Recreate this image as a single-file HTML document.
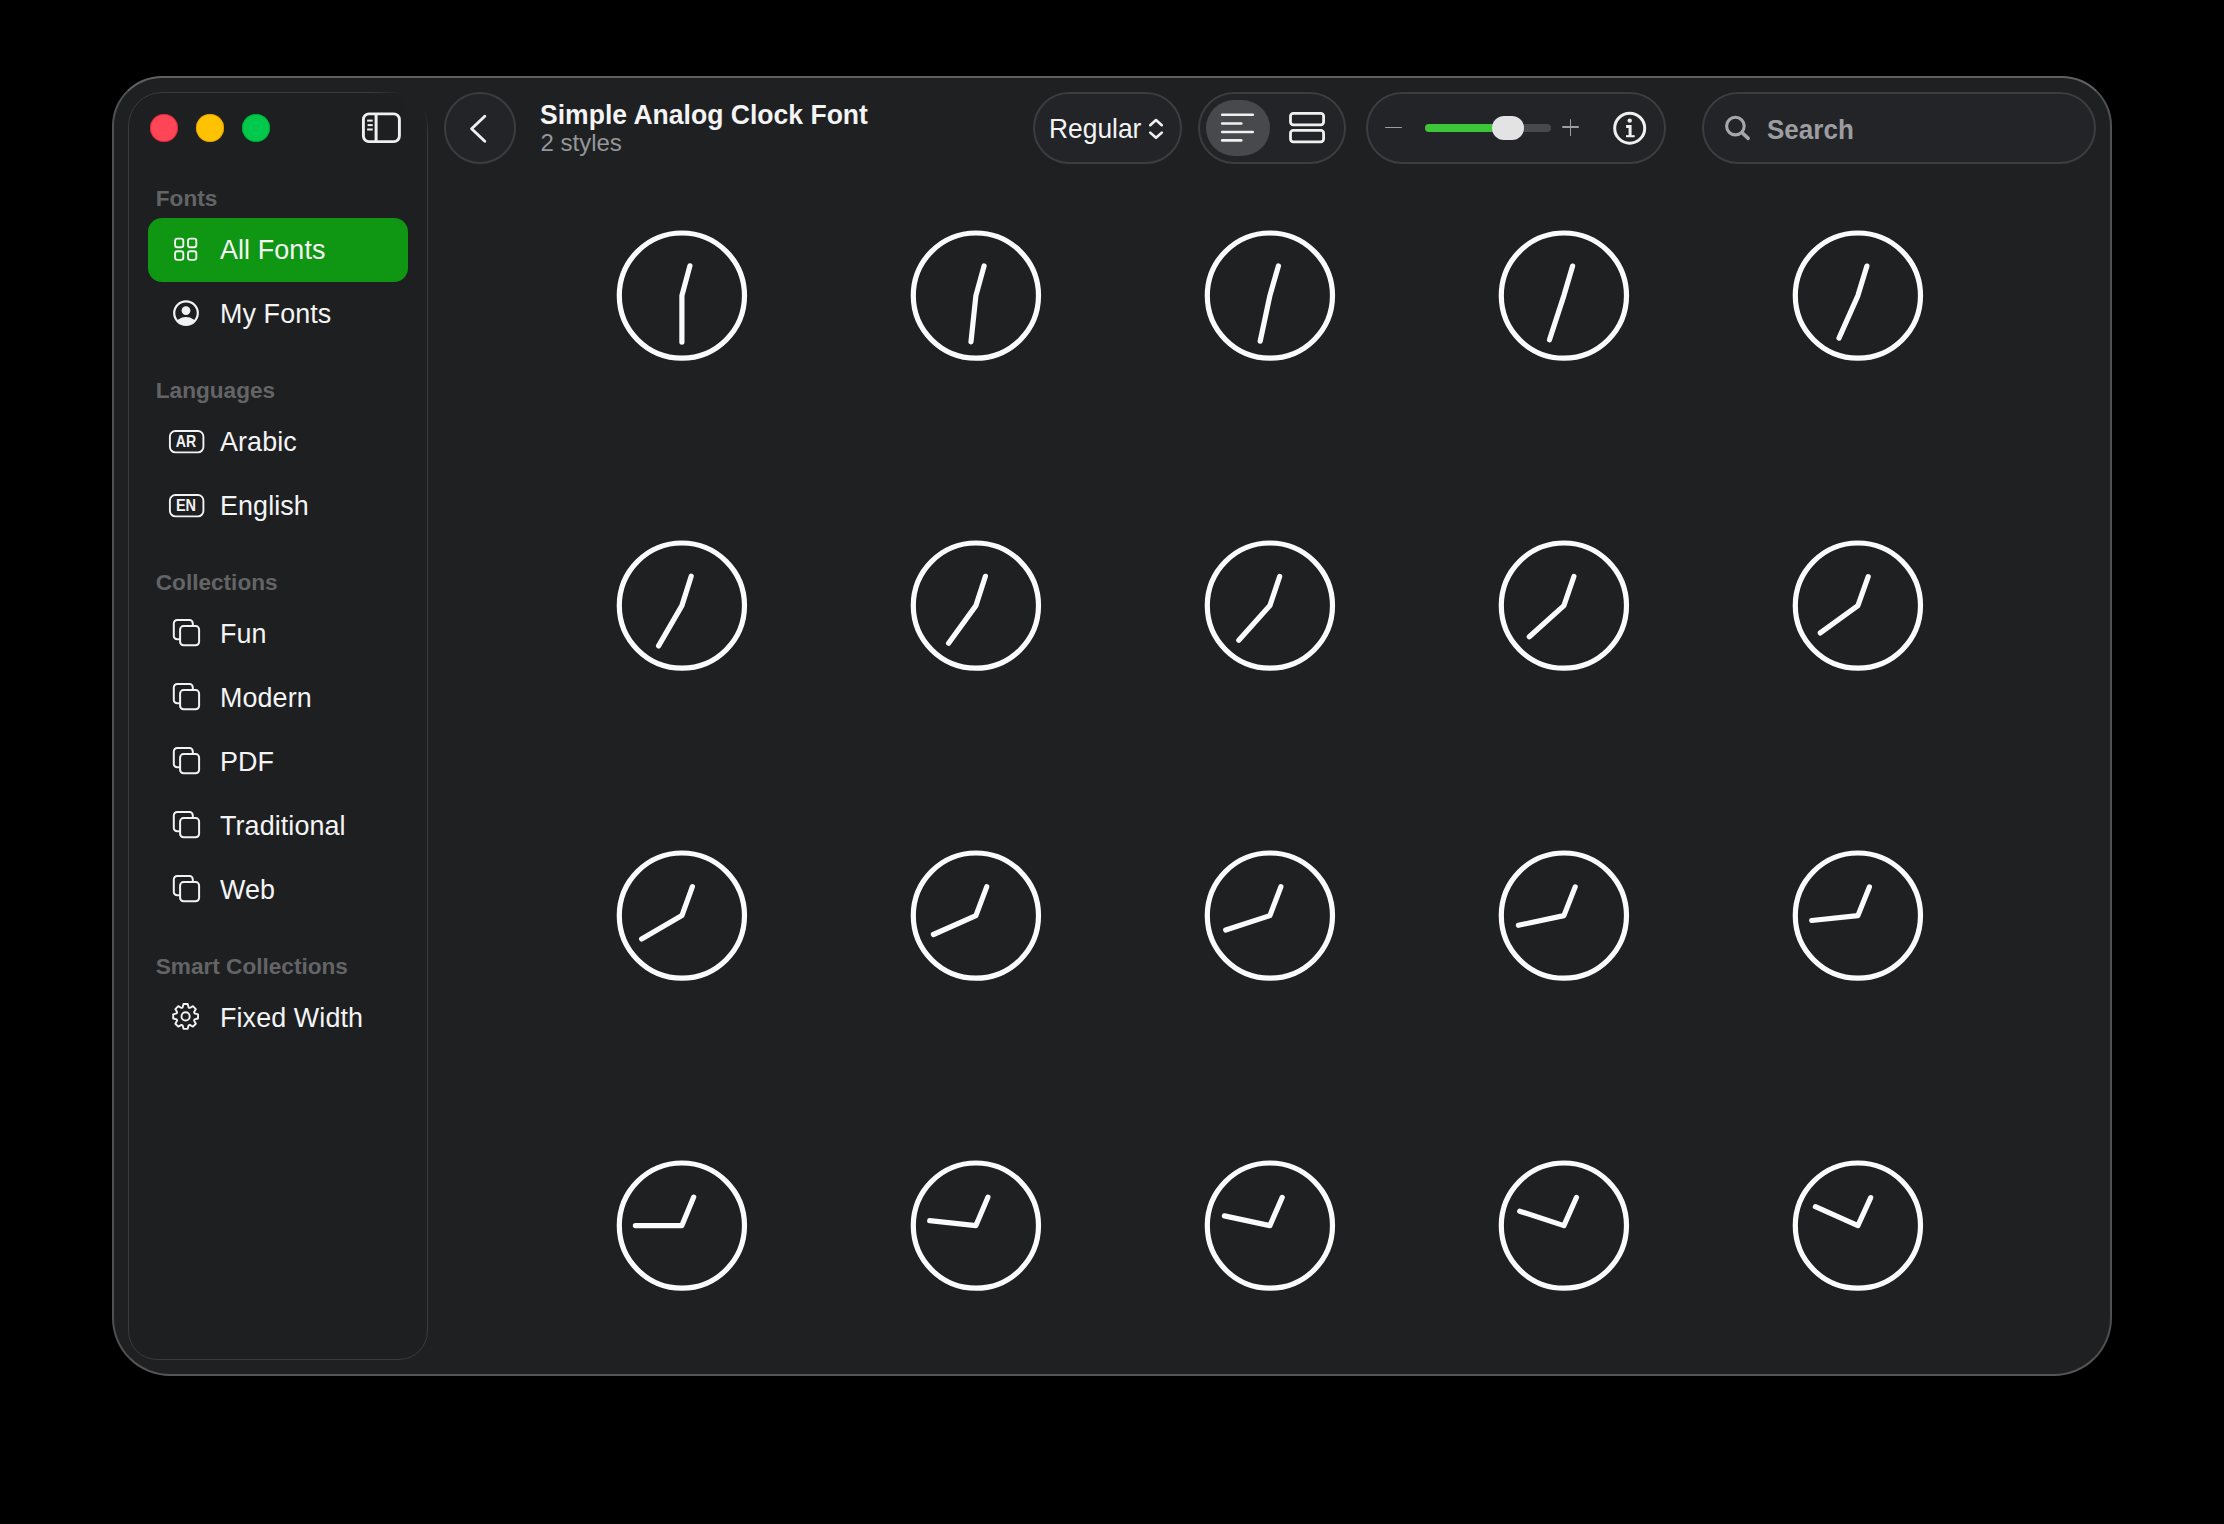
<!DOCTYPE html>
<html><head><meta charset="utf-8">
<style>
*{margin:0;padding:0;box-sizing:border-box}
html,body{width:2224px;height:1524px;background:#000;overflow:hidden}
body{position:relative;font-family:"Liberation Sans",sans-serif}
.a{position:absolute}
.t{position:absolute;white-space:nowrap}
</style></head><body>
<div class="a" style="left:112px;top:76.2px;width:2000px;height:1300.2px;border-radius:50px 50px 58px 58px;background:#1f2022;border:2px solid #505052;border-top-color:#606062;border-bottom-color:#555557"></div>
<div class="a" style="left:127.8px;top:92px;width:300px;height:1267.8px;border-radius:34px 34px 29px 29px;background:#1e1f21;border:1.6px solid #3a3b3d"></div>
<div class="a" style="left:370px;top:89px;width:62px;height:8px;background:linear-gradient(90deg,rgba(31,32,34,0) 0%,#1f2022 55%)"></div>
<div class="a" style="left:405px;top:89px;width:27px;height:45px;background:linear-gradient(180deg,#1f2022 45%,rgba(31,32,34,0) 100%)"></div>
<!-- traffic lights -->
<div class="a" style="left:150px;top:114px;width:28px;height:28px;border-radius:50%;background:#ff4656;box-shadow:inset 0 0 0 1px rgba(200,20,40,0.55)"></div>
<div class="a" style="left:196px;top:114px;width:28px;height:28px;border-radius:50%;background:#ffc200;box-shadow:inset 0 0 0 1px rgba(210,140,0,0.45)"></div>
<div class="a" style="left:242px;top:114px;width:28px;height:28px;border-radius:50%;background:#00c94b;box-shadow:inset 0 0 0 1px rgba(0,140,30,0.45)"></div>
<!-- sidebar toggle -->
<svg class="a" style="left:360px;top:110px" width="44" height="36" viewBox="0 0 44 36" fill="none" stroke="#f0f0f0" stroke-width="3">
<rect x="3.4" y="3.9" width="36" height="27.7" rx="5.6" stroke-width="2.9"/>
<line x1="16.1" y1="4" x2="16.1" y2="31.5"/>
<line x1="7.1" y1="10.6" x2="12.7" y2="10.6" stroke-width="2"/>
<line x1="7.6" y1="15.1" x2="12.7" y2="15.1" stroke-width="2"/>
<line x1="7.1" y1="19.5" x2="12.7" y2="19.5" stroke-width="2"/>
</svg>
<!-- back button -->
<div class="a" style="left:444px;top:92px;width:72px;height:72px;border-radius:50%;background:#222427;border:2px solid #3b3d40"></div>
<svg class="a" style="left:460px;top:108px" width="40" height="40" viewBox="0 0 40 40" fill="none" stroke="#f0f0f0" stroke-width="2.9" stroke-linecap="round" stroke-linejoin="round">
<polyline points="24.8,8.3 11.6,20.8 24.8,33.3"/>
</svg>
<div class="t" style="left:540.2px;top:99.55px;font-size:28.4px;line-height:28.4px;color:#f4f4f5;font-weight:700;letter-spacing:0px;transform:scaleX(0.935);transform-origin:0 0;">Simple Analog Clock Font</div>
<div class="t" style="left:540.5px;top:130.78px;font-size:24px;line-height:24px;color:#95979a;font-weight:400;letter-spacing:0px;">2 styles</div>
<!-- Regular pill -->
<div class="a" style="left:1033px;top:92px;width:149px;height:72px;border-radius:36px;background:#222427;border:2px solid #3b3d40"></div>
<div class="t" style="left:1049.2px;top:114.97px;font-size:27.2px;line-height:27.2px;color:#f4f4f5;font-weight:400;letter-spacing:0px;transform:scaleX(0.97);transform-origin:0 0;">Regular</div>
<svg class="a" style="left:1144px;top:114px" width="24" height="30" viewBox="0 0 24 30" fill="none" stroke="#f0f0f0" stroke-width="2.6" stroke-linecap="round" stroke-linejoin="round">
<polyline points="6.2,11.2 12,6 17.8,11.2"/><polyline points="6.2,18.6 12,23.8 17.8,18.6"/>
</svg>
<!-- view toggle -->
<div class="a" style="left:1198px;top:92px;width:148px;height:72px;border-radius:36px;background:#222427;border:2px solid #3b3d40"></div>
<div class="a" style="left:1206px;top:100px;width:64px;height:56px;border-radius:28px;background:#47494c"></div>
<svg class="a" style="left:1214px;top:106px" width="48" height="44" viewBox="0 0 48 44" fill="none" stroke="#f0f0f0" stroke-width="2.6" stroke-linecap="round">
<line x1="8.2" y1="8.8" x2="38.8" y2="8.8"/><line x1="8.2" y1="17.5" x2="27.3" y2="17.5"/><line x1="8.2" y1="26" x2="38.8" y2="26"/><line x1="8.2" y1="34.4" x2="27.3" y2="34.4"/>
</svg>
<svg class="a" style="left:1284px;top:106px" width="48" height="44" viewBox="0 0 48 44" fill="none" stroke="#f0f0f0" stroke-width="2.8">
<rect x="6.5" y="7.4" width="33.1" height="11.4" rx="2.8"/><rect x="6.5" y="24.4" width="33.1" height="11.4" rx="2.8"/>
</svg>
<!-- slider pill -->
<div class="a" style="left:1366px;top:92px;width:300px;height:72px;border-radius:36px;background:#222427;border:2px solid #3b3d40"></div>
<div class="a" style="left:1385.2px;top:126.5px;width:16.8px;height:1.9px;background:#9c9ea1;border-radius:1px"></div>
<div class="a" style="left:1424.5px;top:124px;width:126px;height:8px;border-radius:4px;background:#47494c"></div>
<div class="a" style="left:1424.5px;top:124px;width:76px;height:8px;border-radius:4px;background:#3fc53a"></div>
<div class="a" style="left:1492px;top:116px;width:32px;height:24px;border-radius:12px;background:#e3e3e3"></div>
<div class="a" style="left:1562px;top:126.4px;width:17px;height:1.9px;background:#9c9ea1;border-radius:1px"></div>
<div class="a" style="left:1569.5px;top:119px;width:1.9px;height:17px;background:#9c9ea1;border-radius:1px"></div>
<svg class="a" style="left:1610px;top:108px" width="40" height="40" viewBox="0 0 40 40" fill="none" stroke="#f0f0f0" stroke-width="3">
<circle cx="19.7" cy="20.2" r="15"/>
<circle cx="19.7" cy="12.6" r="2.2" fill="#f0f0f0" stroke="none"/>
<polyline points="16.1,18.4 20.1,18.4 20.1,28" stroke-width="3" stroke-linejoin="miter"/>
<line x1="16" y1="28.2" x2="24.7" y2="28.2" stroke-width="2.1"/>
</svg>
<!-- search -->
<div class="a" style="left:1702px;top:92px;width:394px;height:72px;border-radius:36px;background:#222427;border:2px solid #3b3d40"></div>
<svg class="a" style="left:1720px;top:110px" width="36" height="36" viewBox="0 0 36 36" fill="none" stroke="#a5a8ab" stroke-width="3.1" stroke-linecap="round">
<circle cx="15.4" cy="16.1" r="8.8"/><line x1="22" y1="22.6" x2="28.2" y2="28.4" stroke-width="3.5"/>
</svg>
<div class="t" style="left:1767.3px;top:115.70px;font-size:27.4px;line-height:27.4px;color:#9c9da0;font-weight:700;letter-spacing:0px;transform:scaleX(0.95);transform-origin:0 0;">Search</div>
<!-- sidebar -->
<div class="t" style="left:155.8px;top:187.56px;font-size:22.6px;line-height:22.6px;color:#646467;font-weight:700;letter-spacing:0px;">Fonts</div>
<div class="a" style="left:148px;top:218px;width:260px;height:64px;border-radius:14px;background:#0f9612"></div>
<svg class="a" style="left:170px;top:234px" width="32" height="32" viewBox="0 0 32 32" fill="none" stroke="#f2f2f2" stroke-width="1.9">
<rect x="5.1" y="4.6" width="8.2" height="8.6" rx="2.3"/><rect x="18" y="4.6" width="8.3" height="8.6" rx="2.3"/>
<rect x="5.1" y="17.3" width="8.2" height="8.6" rx="2.3"/><rect x="18" y="17.3" width="8.3" height="8.6" rx="2.3"/>
</svg>
<div class="t" style="left:220px;top:237.32px;font-size:26.9px;line-height:26.9px;color:#f4f4f5;font-weight:400;letter-spacing:0.1px;">All Fonts</div>
<svg class="a" style="left:170px;top:297px" width="32" height="32" viewBox="0 0 32 32">
<circle cx="16" cy="16.1" r="11.8" fill="none" stroke="#f2f2f2" stroke-width="2.2"/>
<circle cx="16" cy="13.6" r="4.4" fill="#f2f2f2"/>
<defs><clipPath id="uc"><circle cx="16" cy="16.1" r="11.6"/></clipPath></defs><ellipse cx="16" cy="27.6" rx="10.2" ry="7.5" fill="#f2f2f2" clip-path="url(#uc)"/>
</svg>
<div class="t" style="left:220px;top:301.32px;font-size:26.9px;line-height:26.9px;color:#f4f4f5;font-weight:400;letter-spacing:0.1px;">My Fonts</div>
<div class="t" style="left:155.8px;top:379.86px;font-size:22.6px;line-height:22.6px;color:#646467;font-weight:700;letter-spacing:0px;">Languages</div>
<svg class="a" style="left:166px;top:426px" width="40" height="30" viewBox="0 0 40 30"><rect x="3.9" y="5.0" width="33.5" height="21.4" rx="5.5" fill="none" stroke="#f2f2f2" stroke-width="1.9"/>
<text x="9.8" y="21.1" font-family="Liberation Sans" font-weight="700" font-size="16.5" fill="#f2f2f2" textLength="20.4" lengthAdjust="spacingAndGlyphs">AR</text></svg>
<div class="t" style="left:220px;top:429.32px;font-size:26.9px;line-height:26.9px;color:#f4f4f5;font-weight:400;letter-spacing:0.1px;">Arabic</div>
<svg class="a" style="left:166px;top:490px" width="40" height="30" viewBox="0 0 40 30"><rect x="3.9" y="5.0" width="33.5" height="21.4" rx="5.5" fill="none" stroke="#f2f2f2" stroke-width="1.9"/>
<text x="9.9" y="21.0" font-family="Liberation Sans" font-weight="700" font-size="16.5" fill="#f2f2f2" textLength="20.2" lengthAdjust="spacingAndGlyphs">EN</text></svg>
<div class="t" style="left:220px;top:493.32px;font-size:26.9px;line-height:26.9px;color:#f4f4f5;font-weight:400;letter-spacing:0.1px;">English</div>
<div class="t" style="left:155.8px;top:571.76px;font-size:22.6px;line-height:22.6px;color:#646467;font-weight:700;letter-spacing:0px;">Collections</div>
<svg class="a" style="left:168px;top:614.0px" width="36" height="36" viewBox="0 0 36 36" fill="none" stroke="#f2f2f2" stroke-width="2">
<rect x="12.1" y="12.1" width="19" height="19.1" rx="3.4"/>
<path d="M12.1 25.3 H9.2 a3.4 3.4 0 0 1 -3.4-3.4 V9.4 a3.4 3.4 0 0 1 3.4-3.4 H21.4 a3.4 3.4 0 0 1 3.4 3.4 V12.1"/>
</svg>
<div class="t" style="left:220px;top:621.42px;font-size:26.9px;line-height:26.9px;color:#f4f4f5;font-weight:400;letter-spacing:0.1px;">Fun</div>
<svg class="a" style="left:168px;top:678.0px" width="36" height="36" viewBox="0 0 36 36" fill="none" stroke="#f2f2f2" stroke-width="2">
<rect x="12.1" y="12.1" width="19" height="19.1" rx="3.4"/>
<path d="M12.1 25.3 H9.2 a3.4 3.4 0 0 1 -3.4-3.4 V9.4 a3.4 3.4 0 0 1 3.4-3.4 H21.4 a3.4 3.4 0 0 1 3.4 3.4 V12.1"/>
</svg>
<div class="t" style="left:220px;top:685.42px;font-size:26.9px;line-height:26.9px;color:#f4f4f5;font-weight:400;letter-spacing:0.1px;">Modern</div>
<svg class="a" style="left:168px;top:742.0px" width="36" height="36" viewBox="0 0 36 36" fill="none" stroke="#f2f2f2" stroke-width="2">
<rect x="12.1" y="12.1" width="19" height="19.1" rx="3.4"/>
<path d="M12.1 25.3 H9.2 a3.4 3.4 0 0 1 -3.4-3.4 V9.4 a3.4 3.4 0 0 1 3.4-3.4 H21.4 a3.4 3.4 0 0 1 3.4 3.4 V12.1"/>
</svg>
<div class="t" style="left:220px;top:749.42px;font-size:26.9px;line-height:26.9px;color:#f4f4f5;font-weight:400;letter-spacing:0.1px;">PDF</div>
<svg class="a" style="left:168px;top:806.0px" width="36" height="36" viewBox="0 0 36 36" fill="none" stroke="#f2f2f2" stroke-width="2">
<rect x="12.1" y="12.1" width="19" height="19.1" rx="3.4"/>
<path d="M12.1 25.3 H9.2 a3.4 3.4 0 0 1 -3.4-3.4 V9.4 a3.4 3.4 0 0 1 3.4-3.4 H21.4 a3.4 3.4 0 0 1 3.4 3.4 V12.1"/>
</svg>
<div class="t" style="left:220px;top:813.42px;font-size:26.9px;line-height:26.9px;color:#f4f4f5;font-weight:400;letter-spacing:0.1px;">Traditional</div>
<svg class="a" style="left:168px;top:870.0px" width="36" height="36" viewBox="0 0 36 36" fill="none" stroke="#f2f2f2" stroke-width="2">
<rect x="12.1" y="12.1" width="19" height="19.1" rx="3.4"/>
<path d="M12.1 25.3 H9.2 a3.4 3.4 0 0 1 -3.4-3.4 V9.4 a3.4 3.4 0 0 1 3.4-3.4 H21.4 a3.4 3.4 0 0 1 3.4 3.4 V12.1"/>
</svg>
<div class="t" style="left:220px;top:877.42px;font-size:26.9px;line-height:26.9px;color:#f4f4f5;font-weight:400;letter-spacing:0.1px;">Web</div>
<div class="t" style="left:155.8px;top:955.66px;font-size:22.6px;line-height:22.6px;color:#646467;font-weight:700;letter-spacing:0px;">Smart Collections</div>
<svg class="a" style="left:168px;top:999px" width="36" height="36" viewBox="0 0 36 36" fill="none" stroke="#f2f2f2" stroke-width="1.9" stroke-linejoin="round">
<path d="M14.56 8.51 L15.53 4.97 L19.67 4.97 L20.64 8.51 L21.74 8.96 L24.93 7.15 L27.85 10.07 L26.04 13.26 L26.49 14.36 L30.03 15.33 L30.03 19.47 L26.49 20.44 L26.04 21.54 L27.85 24.73 L24.93 27.65 L21.74 25.84 L20.64 26.29 L19.67 29.83 L15.53 29.83 L14.56 26.29 L13.46 25.84 L10.27 27.65 L7.35 24.73 L9.16 21.54 L8.71 20.44 L5.17 19.47 L5.17 15.33 L8.71 14.36 L9.16 13.26 L7.35 10.07 L10.27 7.15 L13.46 8.96Z"/>
<circle cx="17.6" cy="17.4" r="4.1"/>
</svg>
<div class="t" style="left:220px;top:1005.42px;font-size:26.9px;line-height:26.9px;color:#f4f4f5;font-weight:400;letter-spacing:0.1px;">Fixed Width</div>
<svg class="a" style="left:0;top:0" width="2224" height="1524" fill="none" stroke="#fbfbfb" stroke-width="5.2" stroke-linecap="round" stroke-linejoin="round">
<circle cx="681.9" cy="295.6" r="62.6"/>
<polyline points="689.9,265.8 681.9,295.6 681.9,342.1"/>
<circle cx="975.9" cy="295.6" r="62.6"/>
<polyline points="984.1,265.9 975.9,295.6 971.0,341.8"/>
<circle cx="1269.9" cy="295.6" r="62.6"/>
<polyline points="1278.4,266.0 1269.9,295.6 1260.2,341.1"/>
<circle cx="1563.9" cy="295.6" r="62.6"/>
<polyline points="1572.6,266.1 1563.9,295.6 1549.5,339.8"/>
<circle cx="1857.9" cy="295.6" r="62.6"/>
<polyline points="1866.9,266.1 1857.9,295.6 1839.0,338.1"/>
<circle cx="681.9" cy="605.6" r="62.6"/>
<polyline points="691.2,576.2 681.9,605.6 658.6,645.9"/>
<circle cx="975.9" cy="605.6" r="62.6"/>
<polyline points="985.4,576.3 975.9,605.6 948.6,643.2"/>
<circle cx="1269.9" cy="605.6" r="62.6"/>
<polyline points="1279.7,576.4 1269.9,605.6 1238.8,640.2"/>
<circle cx="1563.9" cy="605.6" r="62.6"/>
<polyline points="1573.9,576.5 1563.9,605.6 1529.3,636.7"/>
<circle cx="1857.9" cy="605.6" r="62.6"/>
<polyline points="1868.2,576.6 1857.9,605.6 1820.3,632.9"/>
<circle cx="681.9" cy="915.6" r="62.6"/>
<polyline points="692.4,886.7 681.9,915.6 641.6,938.9"/>
<circle cx="975.9" cy="915.6" r="62.6"/>
<polyline points="986.7,886.8 975.9,915.6 933.4,934.5"/>
<circle cx="1269.9" cy="915.6" r="62.6"/>
<polyline points="1280.9,886.8 1269.9,915.6 1225.7,930.0"/>
<circle cx="1563.9" cy="915.6" r="62.6"/>
<polyline points="1575.2,886.9 1563.9,915.6 1518.4,925.3"/>
<circle cx="1857.9" cy="915.6" r="62.6"/>
<polyline points="1869.4,887.0 1857.9,915.6 1811.7,920.5"/>
<circle cx="681.9" cy="1225.6" r="62.6"/>
<polyline points="693.7,1197.1 681.9,1225.6 635.4,1225.6"/>
<circle cx="975.9" cy="1225.6" r="62.6"/>
<polyline points="987.9,1197.2 975.9,1225.6 929.7,1220.7"/>
<circle cx="1269.9" cy="1225.6" r="62.6"/>
<polyline points="1282.2,1197.4 1269.9,1225.6 1224.4,1215.9"/>
<circle cx="1563.9" cy="1225.6" r="62.6"/>
<polyline points="1576.4,1197.5 1563.9,1225.6 1519.7,1211.2"/>
<circle cx="1857.9" cy="1225.6" r="62.6"/>
<polyline points="1870.7,1197.6 1857.9,1225.6 1815.4,1206.7"/>
</svg>
</body></html>
